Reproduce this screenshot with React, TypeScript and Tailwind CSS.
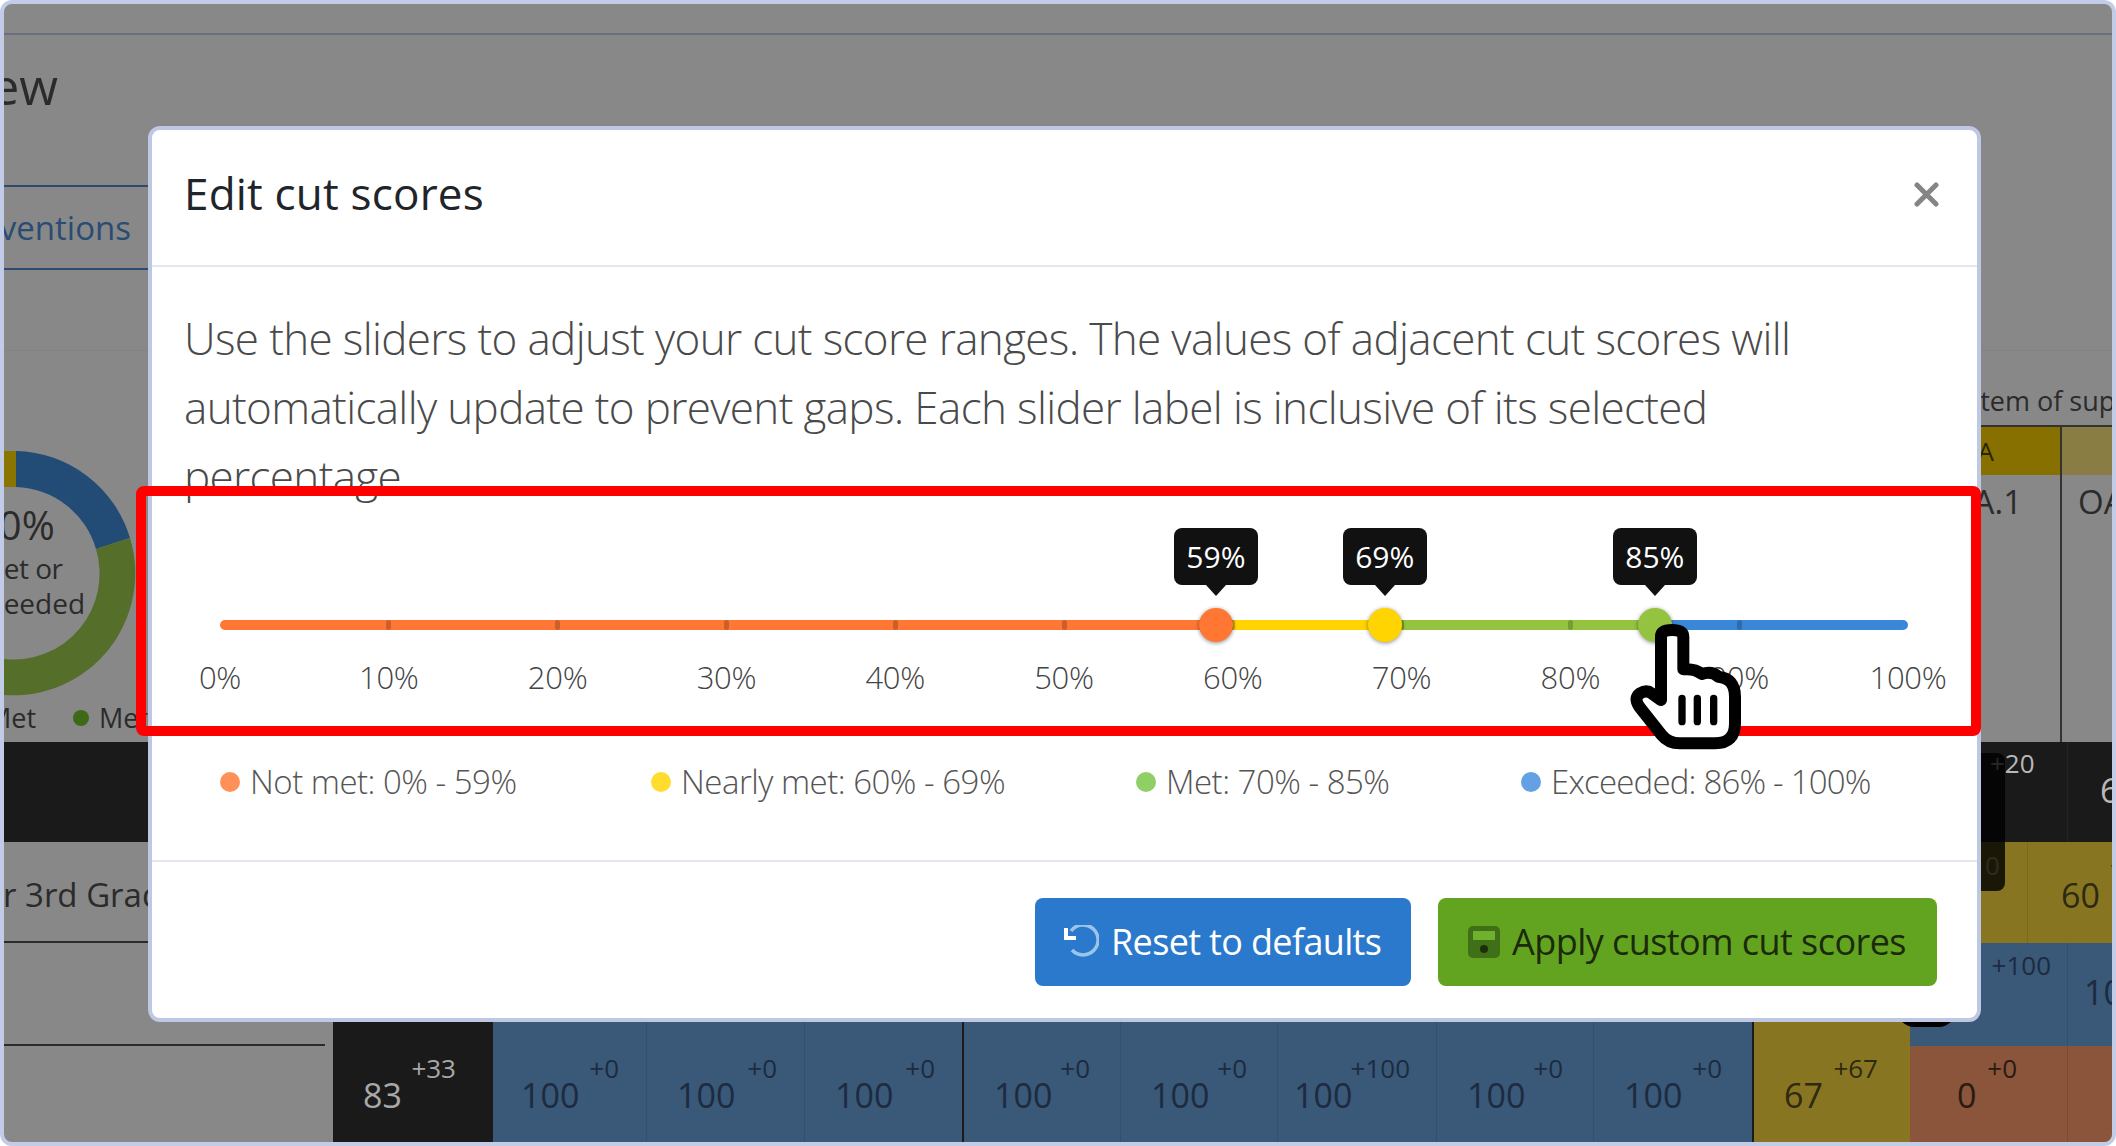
import React from "react";

const F = "font-['Open_Sans','Noto_Sans',sans-serif]";

type Cell = { w: string; bg: string; val?: string; up?: string; pl?: string; pr?: string; text?: string; line?: string };

const blue = "bg-[#3a5878]";
const bLine = "border-r border-[#32506f]";
const blueText = "text-[#1c2b3f]";

const row3: Cell[] = [
  { w: "w-[160px]", bg: "bg-[#1a1a1a]" },
  { w: "w-[154px]", bg: blue, line: bLine },
  { w: "w-[158px]", bg: blue, line: bLine },
  { w: "w-[159px]", bg: blue, line: "border-r-2 border-[#1b1b1b]" },
  { w: "w-[157px]", bg: blue, line: bLine },
  { w: "w-[157px]", bg: blue, line: bLine },
  { w: "w-[159px]", bg: blue, line: bLine },
  { w: "w-[157px]", bg: blue, line: bLine },
  { w: "w-[160px]", bg: blue, line: "border-r-2 border-[#1b1b1b]" },
  { w: "w-[156px]", bg: "bg-[#887522]" },
  { w: "w-[158px]", bg: blue, line: bLine, up: "+100", pr: "pr-[16px]", text: blueText },
  { w: "w-[44px]", bg: blue, val: "10", pl: "pl-[16px]", text: blueText },
];

const row4: Cell[] = [
  { w: "w-[160px]", bg: "bg-[#1a1a1a]", val: "83", up: "+33", pl: "pl-[30px]", pr: "pr-[37px]", text: "text-[#a8a8a8]" },
  { w: "w-[154px]", bg: blue, line: bLine, val: "100", up: "+0", pl: "pl-[28px]", pr: "pr-[27px]", text: blueText },
  { w: "w-[158px]", bg: blue, line: bLine, val: "100", up: "+0", pl: "pl-[30px]", pr: "pr-[27px]", text: blueText },
  { w: "w-[159px]", bg: blue, line: "border-r-2 border-[#1b1b1b]", val: "100", up: "+0", pl: "pl-[30px]", pr: "pr-[27px]", text: blueText },
  { w: "w-[157px]", bg: blue, line: bLine, val: "100", up: "+0", pl: "pl-[30px]", pr: "pr-[30px]", text: blueText },
  { w: "w-[157px]", bg: blue, line: bLine, val: "100", up: "+0", pl: "pl-[30px]", pr: "pr-[30px]", text: blueText },
  { w: "w-[159px]", bg: blue, line: bLine, val: "100", up: "+100", pl: "pl-[16px]", pr: "pr-[26px]", text: blueText },
  { w: "w-[157px]", bg: blue, line: bLine, val: "100", up: "+0", pl: "pl-[30px]", pr: "pr-[30px]", text: blueText },
  { w: "w-[160px]", bg: blue, line: "border-r-2 border-[#1b1b1b]", val: "100", up: "+0", pl: "pl-[30px]", pr: "pr-[30px]", text: blueText },
  { w: "w-[156px]", bg: "bg-[#887522]", val: "67", up: "+67", pl: "pl-[30px]", pr: "pr-[32px]", text: "text-[#2d2a10]" },
  { w: "w-[158px]", bg: "bg-[#8a553a]", line: "border-r border-[#7c4a31]", val: "0", up: "+0", pl: "pl-[47px]", pr: "pr-[50px]", text: "text-[#2b1a12]" },
  { w: "w-[44px]", bg: "bg-[#8a553a]" },
];

function TableCell({ c }: { c: Cell }) {
  return (
    <div className={`${c.w} ${c.bg} ${c.line ?? ""} ${c.text ?? ""} h-full flex flex-col shrink-0`}>
      <div className={`${c.pr ?? ""} flex justify-end h-[39px] items-end text-[26px] leading-[34px] shrink-0`}>{c.up}</div>
      <div className={`${c.pl ?? ""} text-[34px] leading-[20px]`}>{c.val}</div>
    </div>
  );
}

const segs = [
  { w: 60, c: "#ff7733" },
  { w: 10, c: "#ffd400" },
  { w: 15, c: "#94c43f" },
  { w: 15, c: "#3a87da" },
];
const handles = [
  { v: 59, c: "#ff7733" },
  { v: 69, c: "#ffd400" },
  { v: 85, c: "#94c43f" },
];
const ticks = [10, 20, 30, 40, 50, 60, 70, 80, 90];
const labels = [0, 10, 20, 30, 40, 50, 60, 70, 80, 90, 100];

function Legend({ color, w, text, track }: { color: string; w: string; text: string; track?: string }) {
  return (
    <div className={`${w} flex items-center gap-[10px] shrink-0`}>
      <span className={`${color} w-[20px] h-[20px] rounded-full shrink-0`} />
      <span className={`${track ?? ""} whitespace-nowrap`}>{text}</span>
    </div>
  );
}

export default function App() {
  return (
    <div className={`${F} relative w-[2116px] h-[1146px] bg-white overflow-hidden`}>
      {/* page behind the dialog */}
      <div className="w-full h-full border-4 border-[#c3cce6] rounded-xl bg-[#888888] overflow-hidden flex flex-col text-[#2b2b2b]">
        <div className="h-[31px] shrink-0 border-b-2 border-[#6a6f80]" />
        <div className="h-[150px] shrink-0 pt-[17px]">
          <div className="w-[54px] overflow-hidden flex justify-end text-[50px] leading-[68px] whitespace-nowrap">Overview</div>
        </div>
        <div className="h-[85px] w-[144px] shrink-0 border-y-2 border-[#2d4a6f] overflow-hidden flex justify-end items-center">
          <span className="text-[33px] text-[#2a4b73] whitespace-nowrap mr-[17px]">Interventions</span>
        </div>
        <div className="h-[81px] shrink-0 border-b border-[#838383]" />
        <div className="h-[391px] shrink-0 flex justify-end">
          <div className="w-[131px] flex flex-col">
            <div className="h-[74px] flex items-end overflow-hidden justify-start">
              <span className="text-[27px] leading-[48px] whitespace-nowrap ml-[-42px]">System of support</span>
            </div>
            <div className="flex-1 border-t-2 border-[#333333] flex">
              <div className="w-[81px] border-r-2 border-[#333333] flex flex-col overflow-hidden">
                <div className="h-[48px] bg-[#877000] text-[26px] leading-[48px] text-[#2a2400] flex justify-end pr-[66px]">A</div>
                <div className="text-[33px] leading-[54px] whitespace-nowrap flex justify-end pr-[38px]">A.1</div>
              </div>
              <div className="flex-1 flex flex-col overflow-hidden">
                <div className="h-[48px] bg-[#8a7d44]" />
                <div className="text-[33px] leading-[54px] pl-[16px] whitespace-nowrap">OA.1</div>
              </div>
            </div>
          </div>
        </div>
        <div className="h-[100px] shrink-0 bg-[#1a1a1a] flex justify-end">
          <div className="w-[87px] text-[#b8b8b8] text-[26px] leading-[34px] pt-[4px] pl-[9px] border-r border-[#242424] shrink-0">+20</div>
          <div className="w-[44px] text-[#b8b8b8] text-[34px] leading-[36px] pt-[30px] pl-[32px] overflow-hidden shrink-0">6</div>
        </div>
        <div className="h-[101px] shrink-0 flex">
          <div className="w-[329px] shrink-0 border-b-2 border-[#2b2b2b] overflow-hidden flex justify-start items-start text-[33px] leading-[40px] whitespace-nowrap">
            <span className="ml-[-32px] mt-[33px]">for 3rd Grade</span>
          </div>
          <div className="flex-1 bg-[#887522] flex justify-end text-[#2d2a10]">
            <div className="w-[47px] border-r border-[#7b6a1e] text-[26px] leading-[34px] pt-[6px] pl-[4px] text-[#d8d8a0]">0</div>
            <div className="w-[84px] overflow-hidden flex flex-col">
              <div className="h-[39px] shrink-0 pl-[82px] pt-[6px] text-[26px] leading-[34px] whitespace-nowrap">+20</div>
              <div className="pl-[33px] text-[34px] leading-[28px]">60</div>
            </div>
          </div>
        </div>
        <div className="h-[103px] shrink-0 flex">
          <div className="w-[329px] shrink-0 pr-[8px]"><div className="h-full border-b-2 border-[#2b2b2b]" /></div>
          {row3.map((c, i) => <TableCell key={i} c={c} />)}
        </div>
        <div className="flex-1 min-h-0 flex">
          <div className="w-[329px] shrink-0" />
          {row4.map((c, i) => <TableCell key={i} c={c} />)}
        </div>
      </div>

      {/* donut + text clipped at the left edge */}
      <svg className="absolute left-[4px] top-[430px]" width="132" height="280" viewBox="4 430 132 280">
        <path d="M16 451 A122 122 0 0 1 130 538 L96 549 A86 86 0 0 0 16 487 Z" fill="#224b76" />
        <path d="M130 538 A122 122 0 0 1 4 695 L4 659 A86 86 0 0 0 96 549 Z" fill="#556e2a" />
        <path d="M4 451 H16 V487 H4 Z" fill="#8a7500" />
      </svg>
      <div className="absolute left-[4px] top-[500px] w-[100px] overflow-hidden text-[#2b2b2b] flex flex-col">
        <div className="text-[40px] leading-[50px] whitespace-nowrap ml-[-28px]">80%</div>
        <div className="text-[28px] leading-[36px] tracking-[-0.5px] whitespace-nowrap ml-[-25px]">Met or</div>
        <div className="text-[28px] leading-[34px] whitespace-nowrap ml-[-44px]">Exceeded</div>
      </div>
      <div className="absolute left-[4px] top-[700px] w-[144px] overflow-hidden h-[36px] flex items-center text-[#2b2b2b] text-[27px] whitespace-nowrap">
        <span className="ml-[-17px]">Met</span>
        <span className="ml-[37px] mr-[10px] w-[16px] h-[16px] rounded-full bg-[#3e6a18] shrink-0" />
        <span>Met</span>
      </div>

      {/* tooltips stuck open behind the dialog */}
      <div className="absolute left-[1900px] top-[753px] w-[105px] h-[138px] rounded-lg bg-black/80" />
      <div className="absolute left-[1898px] top-[990px] w-[57px] h-[37px] rounded-b-2xl bg-black" />

      {/* dialog */}
      <div className="absolute left-[148px] top-[126px] w-[1833px] h-[896px] bg-white border-4 border-[#bfc8e3] rounded-xl flex flex-col">
        <div className="h-[137px] shrink-0 border-b-2 border-[#e3e7ef] flex justify-between items-start pl-[32px] pr-[38px] pt-[35px]">
          <h2 className="text-[44px] leading-[56px] font-medium tracking-[0.2px] text-[#212529]">Edit cut scores</h2>
          <svg className="mt-[17px]" width="25" height="25" viewBox="0 0 25 25">
            <path d="M3 3 L22 22 M22 3 L3 22" stroke="#858585" strokeWidth="5" strokeLinecap="round" />
          </svg>
        </div>
        <div className="flex-1 min-h-0 flex flex-col">
          <p className="h-[207px] pl-[32px] pr-[127px] pt-[37px] text-[44px] leading-[69px] font-light text-[#4a4a4a] tracking-[-0.65px] shrink-0">
            Use the sliders to adjust your cut score ranges. The values of adjacent cut scores will automatically update to prevent gaps. Each slider label is inclusive of its selected percentage
          </p>
          <div className="ml-[68px] mr-[69px] relative mt-[146px] h-[10px] shrink-0">
            <div className="flex h-full rounded-full overflow-hidden">
              {segs.map((s) => (
                <div key={s.c} className="h-full" style={{ width: `${s.w}%`, backgroundColor: s.c }} />
              ))}
            </div>
            {ticks.map((t) => (
              <span key={t} className="absolute top-0 h-[10px] w-[5px] -ml-[2.5px] rounded-full bg-black/20" style={{ left: `${t}%` }} />
            ))}
            {handles.map((h) => (
              <div key={h.v} className="absolute top-[-12px] w-[34px] h-[34px] -ml-[17px]" style={{ left: `${h.v}%` }}>
                <div className="w-full h-full rounded-full shadow-[0_1px_4px_rgba(0,0,0,0.45)]" style={{ backgroundColor: h.c }} />
                <div className="absolute left-[-25px] top-[-80px] w-[84px] h-[57px] rounded-lg bg-[#111111] text-white text-[30px] leading-[57px] text-center">
                  {h.v}%
                  <span className="absolute left-[32px] top-[57px] w-0 h-0 border-x-[10px] border-x-transparent border-t-[11px] border-t-[#111111]" />
                </div>
              </div>
            ))}
          </div>
          <div className="ml-[68px] mr-[69px] mt-[27px] flex justify-between shrink-0 text-[31px] leading-[40px] font-light text-[#444444] tracking-[-0.3px]">
            {labels.map((l) => (
              <div key={l} className="w-0 flex justify-center whitespace-nowrap">{l}%</div>
            ))}
          </div>
          <div className="ml-[68px] mt-[65px] flex shrink-0 text-[33px] leading-[40px] text-[#555555] font-light tracking-[-0.5px]">
            <Legend color="bg-[#ff9058]" w="w-[431px]" text="Not met: 0% - 59%" />
            <Legend color="bg-[#ffdc2e]" w="w-[485px]" text="Nearly met: 60% - 69%" />
            <Legend color="bg-[#8fcf66]" w="w-[385px]" text="Met: 70% - 85%" />
            <Legend color="bg-[#64a0e4]" w="w-[360px]" track="tracking-[-0.8px]" text="Exceeded: 86% - 100%" />
          </div>
        </div>
        <div className="h-[158px] shrink-0 border-t-2 border-[#e3e7ef] flex justify-end items-start gap-[27px] pr-[40px] pt-[36px]">
          <button className="w-[376px] h-[88px] rounded-lg bg-[#2b79cd] text-white flex items-center gap-[12px] pl-[28px] text-[36px] tracking-[-0.65px] font-normal whitespace-nowrap">
            <svg width="36" height="34" viewBox="0 0 36 34" fill="none">
              <path d="M8 6 A15 15 0 1 1 9 25" stroke="#9cc4ea" strokeWidth="3.5" />
              <path d="M3 3 V13 H13" stroke="white" strokeWidth="4" />
            </svg>
            Reset to defaults
          </button>
          <button className="w-[499px] h-[88px] rounded-lg bg-[#62a420] text-[#1b2a0b] flex items-center gap-[12px] pl-[30px] text-[36px] tracking-[-0.55px] font-normal whitespace-nowrap">
            <svg width="32" height="32" viewBox="0 0 32 32">
              <rect width="32" height="32" rx="5" fill="#3f7017" />
              <rect x="5" y="5" width="22" height="9" fill="#6fb02c" />
              <circle cx="16" cy="23" r="4" fill="#1d2f0a" />
            </svg>
            Apply custom cut scores
          </button>
        </div>
      </div>

      {/* annotation frame */}
      <div className="absolute left-[136px] top-[486px] w-[1845px] h-[250px] border-[10px] border-[#ff0000] rounded-lg" />

      {/* hand cursor */}
      <svg className="absolute left-[1580px] top-[600px]" width="200" height="160" viewBox="0 0 600 480">
        <path d="M243 300 L243 110 Q243 90 277 90 Q310 90 310 110 L310 208 Q345 205 365 222 Q395 212 415 230 Q465 235 465 290 L465 370 Q465 430 405 430 L300 430 Q265 430 245 405 L178 320 Q160 295 180 280 Q200 268 215 280 Z" fill="white" stroke="black" strokeWidth="36" strokeLinejoin="round" />
        <path d="M306 295 V365 M352 295 V365 M401 295 V365" stroke="black" strokeWidth="22" strokeLinecap="round" />
      </svg>
    </div>
  );
}
